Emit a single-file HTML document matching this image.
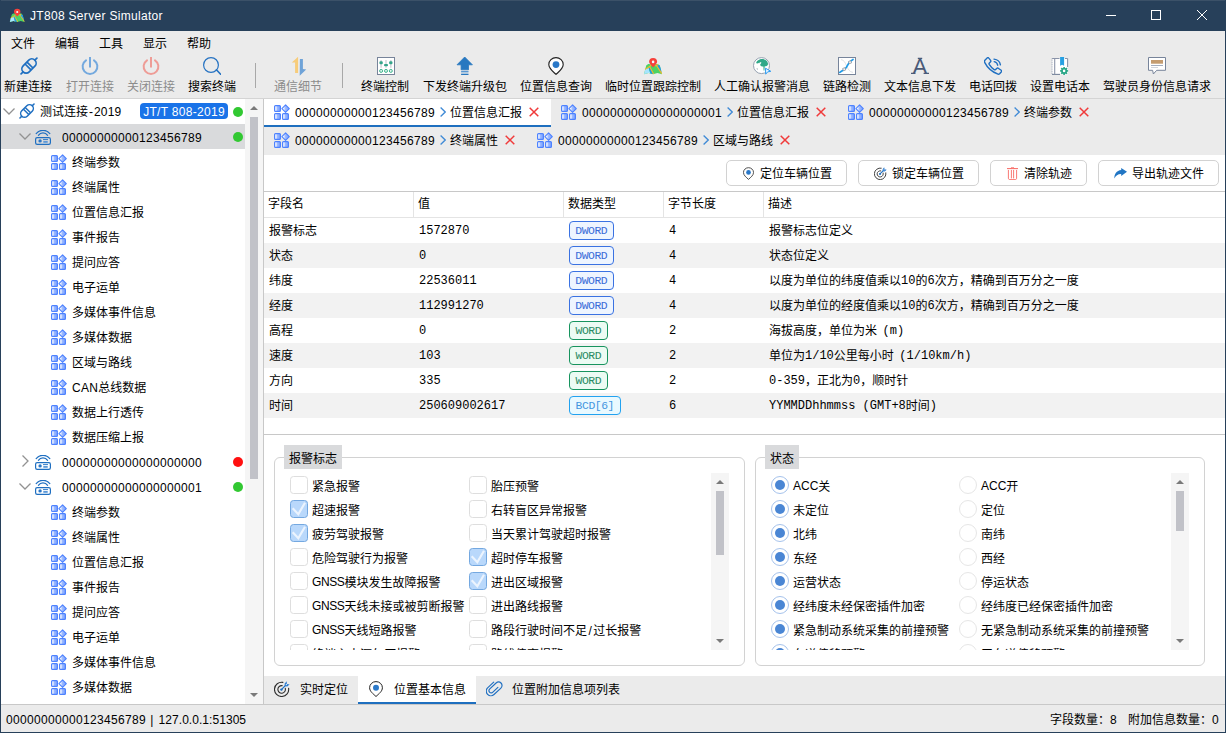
<!DOCTYPE html>
<html lang="zh-CN"><head><meta charset="utf-8"><title>JT808 Server Simulator</title>
<style>
*{box-sizing:border-box;margin:0;padding:0}
html,body{width:1226px;height:733px;overflow:hidden}
body{position:relative;background:#ebebeb;font-family:"Liberation Sans","Noto Sans CJK SC",sans-serif;font-size:12px;color:#000;line-height:16px}
.abs{position:absolute}
.t{position:absolute;white-space:nowrap;line-height:16px;height:16px}
.d{letter-spacing:.33px}
#title{left:0;top:0;width:1226px;height:31px;background:#27405a}
#frameL{left:0;top:0;width:1px;height:733px;background:#27405a}
#frameR{left:1225px;top:0;width:1px;height:733px;background:#27405a}
#frameB{left:0;top:732px;width:1226px;height:1px;background:#27405a}
.tb{position:absolute;top:53px;height:44px;text-align:center}
.tb .lbl{position:absolute;left:0;right:0;top:25px;height:16px;line-height:16px;white-space:nowrap;text-align:center}
.tb svg{position:absolute;top:4px}
.dis{color:#8c8c8c}
.sep{position:absolute;top:63px;width:1px;height:25px;background:#a8a8a8}
#tree{left:1px;top:99px;width:244px;height:606px;background:#fff;overflow:hidden}
.tr{position:absolute;left:0;width:244px;height:25px}
.tr .t{top:6px}
.tr svg{position:absolute}
.dot{position:absolute;width:10px;height:10px;border-radius:50%;left:232px;top:8px}
.g{background:#32c832}.r{background:#ff1010}
.sb{position:absolute;background:#f5f5f5}
.thumb{position:absolute;background:#c1c2c8}
.arr{position:absolute;width:0;height:0;border-left:4px solid transparent;border-right:4px solid transparent}
.up{border-bottom:4px solid #7a7a7a}.dn{border-top:4px solid #7a7a7a}
.tab{position:absolute;height:28px}
.tab svg{position:absolute;top:5px}
.tab .t{top:6px}
.btn{position:absolute;top:160px;height:26px;border:1px solid #d2d2d2;border-radius:5px;background:#fff}
.btn .t{top:5px}
.btn svg{position:absolute}
.hl{position:absolute;height:1px;background:#c8c8c8}
.vl{position:absolute;width:1px;background:#c8c8c8}
.row{position:absolute;left:264px;width:961px;height:25px}
.row .t{top:5px}
.m{font-family:"Liberation Mono","Noto Sans CJK SC",monospace}
.cj{position:relative;top:1px}
.gn{letter-spacing:-.4px;position:relative;top:-1px}
.la{position:relative;top:-1px}
.ns{display:inline-block;width:5.5px}
.bd{position:absolute;left:305px;top:3px;height:19px;border:1px solid;border-radius:4px;font-family:"Liberation Mono","Noto Sans CJK SC",monospace;font-size:11.4px;letter-spacing:-.45px;text-indent:-.45px;line-height:18.5px;text-align:center;overflow:hidden}
.dw{border-color:#3a72e2;background:#eef5ff;color:#3a6cd8;width:45px}
.wd{border-color:#17945e;background:#ecfbf3;color:#2a8a62;width:39px}
.bc{border-color:#22a2f0;background:#e9f9ff;color:#4496e0;width:52px}
.grp{position:absolute;top:457px;height:209px;border:1px solid #d2d2d2;border-radius:6px}
.gl{position:absolute;top:445px;height:24px;background:#d9dadc;line-height:20px;padding:4px 5px 0;white-space:nowrap}
.clip{position:absolute;top:473px;height:177px;overflow:hidden}
.cb{position:absolute;width:18px;height:18px;border:1px solid #dedede;border-radius:3.5px;background:#fff}
.cb.on{background:#b9d8fb;border-color:#74a8e0}
.cb.on svg{position:absolute;left:0;top:0}
.rb{position:absolute;width:18px;height:18px;border:1px solid #e6e6e6;border-radius:50%;background:#fff}
.rb.on{border-color:#a6c3ec}
.rb.on i{position:absolute;left:3px;top:3px;width:10px;height:10px;border-radius:50%;background:#4a86d4}
.btab{position:absolute;top:676px;height:28px}
.btab svg{position:absolute}
.btab .t{top:6px}
</style></head>
<body>

<svg width="0" height="0" style="position:absolute">
<defs>
<linearGradient id="gg" x1="0" x2="1" y1="0" y2="0"><stop offset="0" stop-color="#ffffff"/><stop offset=".22" stop-color="#f4f7ff"/><stop offset=".5" stop-color="#9ab8ff"/><stop offset="1" stop-color="#7aa2ff"/></linearGradient>
<symbol id="grid" viewBox="0 0 16 16">
<rect x=".6" y="1.6" width="5.8" height="5.8" rx=".9" fill="url(#gg)" stroke="#4d82ff" stroke-width="1.2"/>
<rect x=".6" y="9.6" width="5.8" height="5.8" rx=".9" fill="url(#gg)" stroke="#4d82ff" stroke-width="1.2"/>
<rect x="8.6" y="9.6" width="5.8" height="5.8" rx=".9" fill="url(#gg)" stroke="#4d82ff" stroke-width="1.2"/>
<path d="M11.6 .9 L15.3 4.6 L11.6 8.3 L7.9 4.6 Z" fill="url(#gg)" stroke="#4d82ff" stroke-width="1.1" stroke-linejoin="round"/>
</symbol>
<symbol id="plug" viewBox="0 0 18 18">
<g fill="none" stroke="#1f6fc1" stroke-width="1.7" stroke-linecap="round" transform="rotate(-45 9 9)">
<path d="M-2.2 9 H.4"/><path d="M17.6 9 H20.2"/>
<rect x=".7" y="4.7" width="16.6" height="8.6" rx="4.3"/>
<path d="M7.6 4.8 V13.2" stroke-linecap="butt"/><path d="M10.4 4.8 V13.2" stroke-linecap="butt"/>
</g></symbol>
<symbol id="power" viewBox="0 0 18 18">
<g fill="none" stroke="currentColor" stroke-width="2">
<path d="M9 0 V10.5"/><path d="M5 3.3 A7.38 7.38 0 1 0 13 3.3" stroke-linecap="round"/></g></symbol>
<symbol id="search" viewBox="0 0 18 18">
<g fill="none" stroke="#2572c2" stroke-linecap="round"><circle cx="8" cy="8" r="7.4" stroke-width="1.2"/><path d="M13.4 12.8 L17.6 17.2" stroke-width="1.6"/></g></symbol>
<symbol id="updn" viewBox="0 0 18 20">
<path d="M8.1 .8 L1.8 6.5 H5.1 V16.9 H8.1 Z" fill="#f7cc7a"/>
<path d="M9.9 3.1 H12.9 V13 L16.2 13.4 L9.7 19.7 Z" fill="#6fa3d8"/>
</symbol>
<symbol id="ctrl" viewBox="0 0 18 18">
<rect x=".5" y=".5" width="17" height="17" fill="#fff" stroke="#77849a" stroke-width="1"/>
<g stroke="#d6d9de" stroke-width="1.6"><path d="M4.1 3.1 V10.8"/><path d="M9 3.1 V10.8"/><path d="M13.8 3.1 V10.8"/></g>
<g fill="#35a58a"><rect x="2.4" y="4.2" width="3.4" height="3" rx="1.2"/><rect x="7" y="7" width="4" height="2.2" rx="1"/><rect x="12.1" y="4.2" width="3.4" height="3" rx="1.2"/></g>
<g fill="#e4f6ef" stroke="#3fb58f" stroke-width="1"><circle cx="4.1" cy="13.9" r="1.5"/><circle cx="9" cy="13.9" r="1.5"/><circle cx="13.8" cy="13.9" r="1.5"/></g>
</symbol>
<symbol id="upl" viewBox="0 0 18 18">
<path d="M8.7 0 L16.4 7.8 H12.5 V12.8 H5.1 V7.8 H1 Z" fill="#2878c0" stroke="#2878c0" stroke-width=".8" stroke-linejoin="round"/>
<rect x="5.1" y="14" width="7.4" height="1.4" fill="#5a98d2"/><rect x="5.1" y="16.7" width="7.4" height="1.3" fill="#2878c0"/>
</symbol>
<symbol id="pin" viewBox="0 0 14 16">
<path d="M7 15.5 C4 12.7 .6 10.3 .6 6.7 A6.4 6.1 0 0 1 13.4 6.7 C13.4 10.3 10 12.7 7 15.5 Z" fill="#fff" stroke="#222" stroke-width="1"/>
<circle cx="7" cy="6.7" r="3" fill="#2a78c8"/>
</symbol>
<symbol id="map" viewBox="0 0 18 18">
<path d="M0 17.2 L2.2 8.6 C3.5 6.6 5.5 6.6 7 7.4 L9 9 L11 7.4 C12.5 6.6 14.5 6.6 15.8 8.6 L18 17.2 L13.5 16 L9 17.2 L4.5 16 Z" fill="#4cd264"/>
<path d="M0 17.2 L1.2 12.4 L4.6 10.8 L6.4 16.5 L4.5 16 Z" fill="#a6e4fd"/>
<path d="M4.6 10.8 L6 10 L9 17 L6.4 16.5 Z" fill="#1e9be8"/>
<path d="M13 8 L15.8 8.6 L17.6 15 L13 10 Z" fill="#1e9be8"/>
<path d="M1 12.4 L5.6 9.6 L9.6 17 M5.6 9.6 L7.5 8 M11 9 L14 7.4 M12.4 8.4 L17.8 16.6" stroke="#f8b62a" stroke-width="1.1" fill="none"/>
<path d="M9.1 10.4 C7 7.8 5.1 6.8 5.1 4.8 A4 3.8 0 0 1 13.1 4.8 C13.1 6.8 11.2 7.8 9.1 10.4 Z" fill="#f7403a"/>
<circle cx="9.1" cy="4.9" r="1.3" fill="#e8fbff"/>
</symbol>
<symbol id="globe" viewBox="0 0 18 18">
<circle cx="8.5" cy="8.6" r="8" fill="#fff" stroke="#8b97a8" stroke-width=".9"/>
<path d="M3 6.5 C3.5 3.5 6.5 2 9 2 C12.5 2 15 4.5 15 7 C15 8.5 13.5 9.3 12 9.3 L11.7 9.3 L11.4 13.6 L10.6 13.6 L10.4 9.5 C9 9.5 7.5 9 7.2 8 C7 7 8.6 6.5 8.3 5.6 C7.5 4.9 6.6 5.6 6 6.6 L5.3 5.8 L4.6 6.8 L4 6 Z" fill="#2fa888"/>
<path d="M3.4 11.2 L5 11.4 L4.4 13.2 Z" fill="#aab2be"/>
<path d="M12.5 11.2 L17.8 14.3 L14.6 14.9 L12.7 17.2 Z" fill="#e8f5ff" stroke="#2e9bf0" stroke-width="1" stroke-linejoin="round"/>
</symbol>
<symbol id="chart" viewBox="0 0 18 18">
<rect x=".5" y=".5" width="17" height="17" fill="#fff" stroke="#77849a" stroke-width="1"/>
<path d="M3 2.6 C9 3 8 14.8 15 15.4" fill="none" stroke="#dfe2e6" stroke-width="1"/>
<path d="M1.8 15.4 C4 13.6 5.6 13.4 7 12 C9.6 9.6 9.8 7 11.6 5.2 C13 3.8 14 3 15 2.4" fill="none" stroke="#1e9be8" stroke-width="1.7" stroke-linecap="round"/>
<rect x="5" y="11" width="2.4" height="2.4" fill="#fff" stroke="#8a8f98" stroke-width=".7" transform="rotate(-20 6.2 12.2)"/>
<rect x="10.8" y="4" width="2.4" height="2.4" fill="#fff" stroke="#8a8f98" stroke-width=".7" transform="rotate(-20 12 5.2)"/>
</symbol>
<symbol id="phone" viewBox="0 0 18 18">
<g fill="none" stroke="#1f6fc1" stroke-width="1.4" stroke-linecap="round" stroke-linejoin="round">
<path d="M3.4 .8 L.9 3.2 C.4 3.8 .4 4.8 .8 5.6 C3.5 11 8.5 15 14 17.2 C14.6 17.4 15.2 17.2 15.6 16.8 L17.4 14.8 C17.8 14.3 17.7 13.7 17.2 13.3 L14.2 11.2 C13.7 10.9 13.1 11 12.7 11.4 L11.6 12.5 C11.2 12.9 10.6 12.9 10.1 12.6 C8.2 11.2 6.4 9.3 5.2 7.4 C4.9 6.9 5 6.4 5.4 6 L6.6 4.8 C7 4.4 7 3.8 6.6 3.4 L4.6 .9 C4.3 .5 3.8 .5 3.4 .8 Z"/>
<path d="M10.2 4.6 C12 5 13.4 6.4 13.7 8.2"/><path d="M10 2.1 C13.4 2.5 15.9 4.8 16.4 7.8"/>
</g></symbol>
<symbol id="book" viewBox="0 0 18 18">
<path d="M1 1.4 H16.6 V17.4 H1 Z" fill="#fff"/>
<path d="M1 17.4 H9" stroke="#77849a" stroke-width="1.1"/>
<path d="M16.6 1.6 V10" stroke="#8a93a8" stroke-width="1.1"/>
<path d="M1 1.5 H8.5 M14 1.5 H16.6" stroke="#8a93a8" stroke-width="1"/>
<path d="M1 1.4 V17.4" stroke="#aab2c0" stroke-width="1" stroke-dasharray="1.2 .6"/>
<path d="M3.7 1.4 V17.4" stroke="#8a93a8" stroke-width="1.1"/>
<path d="M9.1 0 H13.1 V8.8 L11.1 7.7 L9.1 8.8 Z" fill="#27a0e2"/>
<circle cx="13.1" cy="13.9" r="2.9" fill="#26a585"/>
<g stroke="#26a585" stroke-width="1.6"><path d="M13.1 9.9 V17.9"/><path d="M9.1 13.9 H17.1"/><path d="M10.27 11.07 L15.93 16.73"/><path d="M15.93 11.07 L10.27 16.73"/></g>
<circle cx="13.1" cy="13.9" r="1.3" fill="#fff"/>
</symbol>
<symbol id="chat" viewBox="0 0 18 18">
<path d="M.5 .5 H17.5 V13.3 H8.7 L5.4 17 L4.6 13.3 H.5 Z" fill="#fff" stroke="#77849a" stroke-width="1"/>
<rect x="3" y="3" width="12" height="3.7" fill="#c49c70"/>
<path d="M3 8.5 H15" stroke="#9aa5b8" stroke-width=".9"/><path d="M3 10.5 H10" stroke="#c5ccd6" stroke-width=".8"/>
</symbol>
<symbol id="term" viewBox="0 0 16 16">
<g fill="none" stroke="#1f6fc1" stroke-width="1.2" stroke-linecap="round">
<rect x=".6" y="7.6" width="14.8" height="6.8" rx="1.6"/>
<path d="M1.2 3.6 C4.6 -.8 11.4 -.8 14.8 3.6"/><path d="M3.4 5.3 C5.6 2 10.4 2 12.6 5.3"/>
<path d="M8.4 9.6 H12.6" stroke-width=".9"/>
</g><circle cx="5.1" cy="10.9" r="1.7" fill="#2b78c8"/><rect x="8.3" y="11" width="4.4" height="1.8" fill="#5b98d8"/>
</symbol>
<symbol id="target" viewBox="0 0 16 16">
<g fill="none" stroke="#2c2c2c" stroke-width="1.1" stroke-linecap="round">
<path d="M8.9 1.4 A7.1 7.1 0 1 0 14.6 7.2"/><path d="M8.3 4.7 A3.8 3.8 0 1 0 11.3 7.4"/>
</g>
<circle cx="7.4" cy="8.6" r="1.2" fill="#1f6fc1"/>
<path d="M7.4 8.6 L12 3.9" stroke="#1f6fc1" stroke-width="1.3" stroke-linecap="round"/>
<path d="M10.8 5.2 L10.6 2.8 L12.6 .3 L13 2.9 L15.6 3.4 L13.2 5.4 Z" fill="#2b7bd0"/>
<circle cx="12.4" cy="3.5" r=".7" fill="#cfe4f8"/>
</symbol>
<symbol id="trash" viewBox="0 0 11 13">
<g fill="none" stroke="#f86a64" stroke-width=".9" stroke-linecap="round">
<path d="M0 1.6 H11" stroke-width="1"/><path d="M3.7 1.5 C4.2 .4 4.6 .4 5.5 .4 C6.4 .4 6.8 .4 7.3 1.5"/>
<path d="M1.4 3.3 V11 C1.4 12.2 2 12.6 3 12.6 H8 C9 12.6 9.6 12.2 9.6 11 V3.3"/>
<path d="M4.4 3.3 V11 M6.6 3.3 V11"/>
</g></symbol>
<symbol id="share" viewBox="0 0 13 11">
<path d="M7.2 0 L13 3.8 L7.2 8 V6.1 C4 6 1.8 7.6 .4 10.6 C.2 6 2.6 2.6 7.2 2.1 Z" fill="#2176c4"/>
</symbol>
<symbol id="clip" viewBox="0 0 17 16">
<path d="M7.7 1.2 L1.6 6.8 C-.2 8.6 -.2 11.6 1.6 13.4 C3.4 15.2 6.2 15.2 8 13.5 L14.9 7.1 C16.4 5.7 16.4 3.4 15 2 C13.6 .6 11.5 .7 10.1 2 L3.8 7.9 C2.8 8.9 2.8 10.4 3.7 11.3 C4.6 12.2 6 12.1 6.9 11.2 L11.9 6.3" fill="none" stroke="#1f6fc1" stroke-width="1.15" stroke-linecap="round"/>
</symbol>
<symbol id="appicon" viewBox="0 0 18 18">
<path d="M0 17.2 L2.2 8.6 C3.5 6.6 5.5 6.6 7 7.4 L9 9 L11 7.4 C12.5 6.6 14.5 6.6 15.8 8.6 L18 17.2 L13.5 16 L9 17.2 L4.5 16 Z" fill="#4cd264"/>
<path d="M0 17.2 L1.2 12.4 L4.6 10.8 L6.4 16.5 L4.5 16 Z" fill="#a6e4fd"/>
<path d="M4.6 10.8 L6 10 L9 17 L6.4 16.5 Z" fill="#1e9be8"/>
<path d="M13 8 L15.8 8.6 L17.6 15 L13 10 Z" fill="#1e9be8"/>
<path d="M1 12.4 L5.6 9.6 L9.6 17 M5.6 9.6 L7.5 8 M11 9 L14 7.4 M12.4 8.4 L17.8 16.6" stroke="#f8b62a" stroke-width="1.1" fill="none"/>
<path d="M9.1 10.4 C7 7.8 5.1 6.8 5.1 4.8 A4 3.8 0 0 1 13.1 4.8 C13.1 6.8 11.2 7.8 9.1 10.4 Z" fill="#f7403a"/>
<circle cx="9.1" cy="4.9" r="1.3" fill="#e8fbff"/>
</symbol>
</defs></svg>

<div id="title" class="abs"></div>
<svg class="abs" style="left:9px;top:7.6px" width="16.3" height="14.6" preserveAspectRatio="none"><use href="#appicon"/></svg>
<div class="abs" style="left:0;top:0;width:1226px;height:1px;background:#3b5168"></div>
<div class="t" style="left:30px;top:8px;color:#fff;font-size:12px;letter-spacing:.31px">JT808 Server Simulator</div>
<svg class="abs" style="left:1100px;top:0" width="120" height="31"><g stroke="#fff" stroke-width="1" fill="none"><path d="M6 15.5 H16"/><rect x="51.5" y="10.5" width="9" height="9"/><path d="M97 10 L107 20 M107 10 L97 20"/></g></svg>
<div class="t" style="left:11px;top:36px">文件</div>
<div class="t" style="left:55px;top:36px">编辑</div>
<div class="t" style="left:99px;top:36px">工具</div>
<div class="t" style="left:143px;top:36px">显示</div>
<div class="t" style="left:187px;top:36px">帮助</div>
<div class="t " style="left:4px;top:79px">新建连接</div>
<svg class="abs" style="left:20px;top:57px" width="18" height="18" ><use href="#plug"/></svg>
<div class="t dis" style="left:66px;top:79px">打开连接</div>
<svg class="abs" style="left:81px;top:57px" width="18" height="18"  color="#74a9de"><use href="#power"/></svg>
<div class="t dis" style="left:127px;top:79px">关闭连接</div>
<svg class="abs" style="left:142px;top:57px" width="18" height="18"  color="#ee9c96"><use href="#power"/></svg>
<div class="t " style="left:188px;top:79px">搜索终端</div>
<svg class="abs" style="left:203px;top:57px" width="18" height="18" ><use href="#search"/></svg>
<div class="t dis" style="left:274px;top:79px">通信细节</div>
<svg class="abs" style="left:290px;top:56px" width="18" height="20" ><use href="#updn"/></svg>
<div class="t " style="left:361px;top:79px">终端控制</div>
<svg class="abs" style="left:377px;top:57px" width="18" height="18" ><use href="#ctrl"/></svg>
<div class="t " style="left:423px;top:79px">下发终端升级包</div>
<svg class="abs" style="left:456px;top:57px" width="18" height="18" ><use href="#upl"/></svg>
<div class="t " style="left:520px;top:79px">位置信息查询</div>
<svg class="abs" style="left:548px;top:57px" width="16" height="18" ><use href="#pin"/></svg>
<div class="t " style="left:605px;top:79px">临时位置跟踪控制</div>
<svg class="abs" style="left:644px;top:57px" width="18" height="18" ><use href="#map"/></svg>
<div class="t " style="left:714px;top:79px">人工确认报警消息</div>
<svg class="abs" style="left:753px;top:57px" width="18" height="18" ><use href="#globe"/></svg>
<div class="t " style="left:823px;top:79px">链路检测</div>
<svg class="abs" style="left:838px;top:57px" width="18" height="18" ><use href="#chart"/></svg>
<div class="t " style="left:884px;top:79px">文本信息下发</div>
<svg class="abs" style="left:911px;top:57px" width="18" height="18"><text x="1.6" y="16.9" textLength="14.8" lengthAdjust="spacingAndGlyphs" font-family="Liberation Sans,sans-serif" font-size="22.4" fill="#4a5a78">A</text><path d="M0 16.3 H4.4 M12.6 16.3 H18 M6.8 1.3 H11.2" stroke="#4a5a78" stroke-width="1.3" fill="none"/></svg>
<div class="t " style="left:969px;top:79px">电话回拨</div>
<svg class="abs" style="left:984px;top:57px" width="18" height="18" ><use href="#phone"/></svg>
<div class="t " style="left:1030px;top:79px">设置电话本</div>
<svg class="abs" style="left:1051px;top:57px" width="18" height="18" ><use href="#book"/></svg>
<div class="t " style="left:1103px;top:79px">驾驶员身份信息请求</div>
<svg class="abs" style="left:1148px;top:57px" width="18" height="18" ><use href="#chat"/></svg>
<div class="sep" style="left:255px"></div><div class="sep" style="left:342px"></div>
<div class="hl" style="left:1px;top:98px;width:1224px;background:#d4d4d4"></div>
<div id="tree" class="abs">
<div class="tr" style="top:0px">
<svg style="left:2px;top:9px" width="12" height="7"><path d="M.5 .5 L6 6 L11.5 .5" fill="none" stroke="#929292" stroke-width="1.3"/></svg>
<svg style="left:18px;top:4px" width="16" height="16"><use href="#plug"/></svg>
<div class="t" style="left:39px;top:5px">测试连接<span style="padding:0 1px">-</span><span style="letter-spacing:.15px">2019</span></div>
<div class="t" style="left:139px;top:4px;width:88px;height:16px;background:#1a73e8;border-radius:4px;color:#fff;text-align:center;letter-spacing:.3px;line-height:18px;overflow:hidden">JT/T 808-2019</div>
<div class="dot g"></div>
</div>
<div class="tr" style="top:25px;background:#d9dadc">
<svg style="left:18px;top:9px" width="12" height="7"><path d="M.5 .5 L6 6 L11.5 .5" fill="none" stroke="#929292" stroke-width="1.3"/></svg>
<svg style="left:34px;top:6px" width="16" height="16"><use href="#term"/></svg>
<div class="t d" style="left:61px">00000000000123456789</div>
<div class="dot g"></div>
</div>
<div class="tr" style="top:50px">
<svg style="left:50px;top:5px" width="16" height="16"><use href="#grid"/></svg>
<div class="t" style="left:71px">终端参数</div>
</div>
<div class="tr" style="top:75px">
<svg style="left:50px;top:5px" width="16" height="16"><use href="#grid"/></svg>
<div class="t" style="left:71px">终端属性</div>
</div>
<div class="tr" style="top:100px">
<svg style="left:50px;top:5px" width="16" height="16"><use href="#grid"/></svg>
<div class="t" style="left:71px">位置信息汇报</div>
</div>
<div class="tr" style="top:125px">
<svg style="left:50px;top:5px" width="16" height="16"><use href="#grid"/></svg>
<div class="t" style="left:71px">事件报告</div>
</div>
<div class="tr" style="top:150px">
<svg style="left:50px;top:5px" width="16" height="16"><use href="#grid"/></svg>
<div class="t" style="left:71px">提问应答</div>
</div>
<div class="tr" style="top:175px">
<svg style="left:50px;top:5px" width="16" height="16"><use href="#grid"/></svg>
<div class="t" style="left:71px">电子运单</div>
</div>
<div class="tr" style="top:200px">
<svg style="left:50px;top:5px" width="16" height="16"><use href="#grid"/></svg>
<div class="t" style="left:71px">多媒体事件信息</div>
</div>
<div class="tr" style="top:225px">
<svg style="left:50px;top:5px" width="16" height="16"><use href="#grid"/></svg>
<div class="t" style="left:71px">多媒体数据</div>
</div>
<div class="tr" style="top:250px">
<svg style="left:50px;top:5px" width="16" height="16"><use href="#grid"/></svg>
<div class="t" style="left:71px">区域与路线</div>
</div>
<div class="tr" style="top:275px">
<svg style="left:50px;top:5px" width="16" height="16"><use href="#grid"/></svg>
<div class="t" style="left:71px"><span style="letter-spacing:.3px">CAN</span>总线数据</div>
</div>
<div class="tr" style="top:300px">
<svg style="left:50px;top:5px" width="16" height="16"><use href="#grid"/></svg>
<div class="t" style="left:71px">数据上行透传</div>
</div>
<div class="tr" style="top:325px">
<svg style="left:50px;top:5px" width="16" height="16"><use href="#grid"/></svg>
<div class="t" style="left:71px">数据压缩上报</div>
</div>
<div class="tr" style="top:350px">
<svg style="left:21px;top:6px" width="7" height="12"><path d="M.5 .5 L6 6 L.5 11.5" fill="none" stroke="#929292" stroke-width="1.3"/></svg>
<svg style="left:34px;top:6px" width="16" height="16"><use href="#term"/></svg>
<div class="t d" style="left:61px">00000000000000000000</div>
<div class="dot r"></div>
</div>
<div class="tr" style="top:375px">
<svg style="left:18px;top:9px" width="12" height="7"><path d="M.5 .5 L6 6 L11.5 .5" fill="none" stroke="#929292" stroke-width="1.3"/></svg>
<svg style="left:34px;top:6px" width="16" height="16"><use href="#term"/></svg>
<div class="t d" style="left:61px">00000000000000000001</div>
<div class="dot g"></div>
</div>
<div class="tr" style="top:400px">
<svg style="left:50px;top:5px" width="16" height="16"><use href="#grid"/></svg>
<div class="t" style="left:71px">终端参数</div>
</div>
<div class="tr" style="top:425px">
<svg style="left:50px;top:5px" width="16" height="16"><use href="#grid"/></svg>
<div class="t" style="left:71px">终端属性</div>
</div>
<div class="tr" style="top:450px">
<svg style="left:50px;top:5px" width="16" height="16"><use href="#grid"/></svg>
<div class="t" style="left:71px">位置信息汇报</div>
</div>
<div class="tr" style="top:475px">
<svg style="left:50px;top:5px" width="16" height="16"><use href="#grid"/></svg>
<div class="t" style="left:71px">事件报告</div>
</div>
<div class="tr" style="top:500px">
<svg style="left:50px;top:5px" width="16" height="16"><use href="#grid"/></svg>
<div class="t" style="left:71px">提问应答</div>
</div>
<div class="tr" style="top:525px">
<svg style="left:50px;top:5px" width="16" height="16"><use href="#grid"/></svg>
<div class="t" style="left:71px">电子运单</div>
</div>
<div class="tr" style="top:550px">
<svg style="left:50px;top:5px" width="16" height="16"><use href="#grid"/></svg>
<div class="t" style="left:71px">多媒体事件信息</div>
</div>
<div class="tr" style="top:575px">
<svg style="left:50px;top:5px" width="16" height="16"><use href="#grid"/></svg>
<div class="t" style="left:71px">多媒体数据</div>
</div>
</div>
<div class="sb" style="left:245px;top:99px;width:18px;height:606px"></div>
<div class="arr up" style="left:250px;top:106px"></div>
<div class="thumb" style="left:250px;top:117px;width:8px;height:362px"></div>
<div class="arr dn" style="left:250px;top:693px"></div>
<div class="vl" style="left:263px;top:99px;height:606px"></div>
<div class="abs" style="left:264px;top:155px;width:961px;height:521px;background:#fff"></div>
<div class="tab" style="left:264px;top:99px;width:287px;background:#fff;border-bottom:2px solid #1e6fbf;"><svg style="left:10px" width="16" height="16"><use href="#grid"/></svg><div class="t" style="left:31px"><span class="d">00000000000123456789</span></div><svg style="left:176px;top:8px" width="6" height="10"><path d="M.6 .5 L5.2 5 L.6 9.5" fill="none" stroke="#3f8ad6" stroke-width="1.3"/></svg><div class="t" style="left:186px">位置信息汇报</div><svg style="left:265px;top:8px" width="10" height="10"><path d="M.7 .7 L9.3 9.3 M9.3 .7 L.7 9.3" stroke="#f03a3a" stroke-width="1.5"/></svg></div>
<div class="tab" style="left:551px;top:99px;width:287px;"><svg style="left:10px" width="16" height="16"><use href="#grid"/></svg><div class="t" style="left:31px"><span class="d">00000000000000000001</span></div><svg style="left:176px;top:8px" width="6" height="10"><path d="M.6 .5 L5.2 5 L.6 9.5" fill="none" stroke="#3f8ad6" stroke-width="1.3"/></svg><div class="t" style="left:186px">位置信息汇报</div><svg style="left:265px;top:8px" width="10" height="10"><path d="M.7 .7 L9.3 9.3 M9.3 .7 L.7 9.3" stroke="#f03a3a" stroke-width="1.5"/></svg></div>
<div class="tab" style="left:838px;top:99px;width:263px;"><svg style="left:10px" width="16" height="16"><use href="#grid"/></svg><div class="t" style="left:31px"><span class="d">00000000000123456789</span></div><svg style="left:176px;top:8px" width="6" height="10"><path d="M.6 .5 L5.2 5 L.6 9.5" fill="none" stroke="#3f8ad6" stroke-width="1.3"/></svg><div class="t" style="left:186px">终端参数</div><svg style="left:241px;top:8px" width="10" height="10"><path d="M.7 .7 L9.3 9.3 M9.3 .7 L.7 9.3" stroke="#f03a3a" stroke-width="1.5"/></svg></div>
<div class="tab" style="left:264px;top:127px;width:263px;"><svg style="left:10px" width="16" height="16"><use href="#grid"/></svg><div class="t" style="left:31px"><span class="d">00000000000123456789</span></div><svg style="left:176px;top:8px" width="6" height="10"><path d="M.6 .5 L5.2 5 L.6 9.5" fill="none" stroke="#3f8ad6" stroke-width="1.3"/></svg><div class="t" style="left:186px">终端属性</div><svg style="left:241px;top:8px" width="10" height="10"><path d="M.7 .7 L9.3 9.3 M9.3 .7 L.7 9.3" stroke="#f03a3a" stroke-width="1.5"/></svg></div>
<div class="tab" style="left:527px;top:127px;width:275px;"><svg style="left:10px" width="16" height="16"><use href="#grid"/></svg><div class="t" style="left:31px"><span class="d">00000000000123456789</span></div><svg style="left:176px;top:8px" width="6" height="10"><path d="M.6 .5 L5.2 5 L.6 9.5" fill="none" stroke="#3f8ad6" stroke-width="1.3"/></svg><div class="t" style="left:186px">区域与路线</div><svg style="left:253px;top:8px" width="10" height="10"><path d="M.7 .7 L9.3 9.3 M9.3 .7 L.7 9.3" stroke="#f03a3a" stroke-width="1.5"/></svg></div>
<div class="btn" style="left:726px;width:121px"><svg style="left:16px;top:6px" width="11" height="13"><use href="#pin"/></svg><div class="t" style="left:33px">定位车辆位置</div></div>
<div class="btn" style="left:858px;width:121px"><svg style="left:15px;top:6px" width="13" height="13"><use href="#target"/></svg><div class="t" style="left:33px">锁定车辆位置</div></div>
<div class="btn" style="left:990px;width:97px"><svg style="left:16px;top:6px" width="11" height="13"><use href="#trash"/></svg><div class="t" style="left:33px">清除轨迹</div></div>
<div class="btn" style="left:1098px;width:121px"><svg style="left:15px;top:6.5px" width="13" height="11"><use href="#share"/></svg><div class="t" style="left:33px">导出轨迹文件</div></div>
<div class="hl" style="left:264px;top:191px;width:961px"></div>
<div class="hl" style="left:264px;top:217px;width:961px;background:#e4e4e4"></div>
<div class="vl" style="left:413px;top:192px;height:25px;background:#e4e4e4"></div>
<div class="vl" style="left:563px;top:192px;height:25px;background:#e4e4e4"></div>
<div class="vl" style="left:663px;top:192px;height:25px;background:#e4e4e4"></div>
<div class="vl" style="left:763px;top:192px;height:25px;background:#e4e4e4"></div>
<div class="t" style="left:268px;top:196px">字段名</div>
<div class="t" style="left:418px;top:196px">值</div>
<div class="t" style="left:568px;top:196px">数据类型</div>
<div class="t" style="left:668px;top:196px">字节长度</div>
<div class="t" style="left:768px;top:196px">描述</div>
<div class="row" style="top:218px;">
<div class="t" style="left:5px">报警标志</div>
<div class="t m" style="left:155px">1572870</div>
<div class="bd dw">DWORD</div>
<div class="t m" style="left:405px">4</div>
<div class="t m" style="left:505px"><span class="cj">报警标志位定义</span></div>
</div>
<div class="row" style="top:243px;background:#f2f2f2;">
<div class="t" style="left:5px">状态</div>
<div class="t m" style="left:155px">0</div>
<div class="bd dw">DWORD</div>
<div class="t m" style="left:405px">4</div>
<div class="t m" style="left:505px"><span class="cj">状态位定义</span></div>
</div>
<div class="row" style="top:268px;">
<div class="t" style="left:5px">纬度</div>
<div class="t m" style="left:155px">22536011</div>
<div class="bd dw">DWORD</div>
<div class="t m" style="left:405px">4</div>
<div class="t m" style="left:505px"><span class="cj">以度为单位的纬度值乘以</span>10<span class="cj">的</span>6<span class="cj">次方，精确到百万分之一度</span></div>
</div>
<div class="row" style="top:293px;background:#f2f2f2;">
<div class="t" style="left:5px">经度</div>
<div class="t m" style="left:155px">112991270</div>
<div class="bd dw">DWORD</div>
<div class="t m" style="left:405px">4</div>
<div class="t m" style="left:505px"><span class="cj">以度为单位的经度值乘以</span>10<span class="cj">的</span>6<span class="cj">次方，精确到百万分之一度</span></div>
</div>
<div class="row" style="top:318px;">
<div class="t" style="left:5px">高程</div>
<div class="t m" style="left:155px">0</div>
<div class="bd wd">WORD</div>
<div class="t m" style="left:405px">2</div>
<div class="t m" style="left:505px"><span class="cj">海拔高度，单位为米</span><span class="ns"> </span>(m)</div>
</div>
<div class="row" style="top:343px;background:#f2f2f2;">
<div class="t" style="left:5px">速度</div>
<div class="t m" style="left:155px">103</div>
<div class="bd wd">WORD</div>
<div class="t m" style="left:405px">2</div>
<div class="t m" style="left:505px"><span class="cj">单位为</span>1/10<span class="cj">公里每小时</span><span class="ns"> </span>(1/10km/h)</div>
</div>
<div class="row" style="top:368px;">
<div class="t" style="left:5px">方向</div>
<div class="t m" style="left:155px">335</div>
<div class="bd wd">WORD</div>
<div class="t m" style="left:405px">2</div>
<div class="t m" style="left:505px">0-359<span class="cj">，正北为</span>0<span class="cj">，顺时针</span></div>
</div>
<div class="row" style="top:393px;background:#f2f2f2;">
<div class="t" style="left:5px">时间</div>
<div class="t m" style="left:155px">250609002617</div>
<div class="bd bc">BCD[6]</div>
<div class="t m" style="left:405px">6</div>
<div class="t m" style="left:505px">YYMMDDhhmmss (GMT+8<span class="cj">时间</span>)</div>
</div>
<div class="hl" style="left:264px;top:434px;width:961px"></div>
<div class="grp" style="left:274px;width:471px"></div>
<div class="grp" style="left:755px;width:450px"></div>
<div class="gl" style="left:284px">报警标志</div>
<div class="gl" style="left:765px">状态</div>
<div class="clip" style="left:284px;width:427px">
<div class="cb" style="left:6px;top:3px"></div><div class="t" style="left:28px;top:6px">紧急报警</div>
<div class="cb" style="left:185px;top:3px"></div><div class="t" style="left:207px;top:6px">胎压预警</div>
<div class="cb on" style="left:6px;top:27px"><svg width="16" height="16"><path d="M1.7 7.3 L7.3 13.2 L14 1.7" fill="none" stroke="#fff" stroke-opacity=".72" stroke-width="2.2"/></svg></div><div class="t" style="left:28px;top:30px">超速报警</div>
<div class="cb" style="left:185px;top:27px"></div><div class="t" style="left:207px;top:30px">右转盲区异常报警</div>
<div class="cb on" style="left:6px;top:51px"><svg width="16" height="16"><path d="M1.7 7.3 L7.3 13.2 L14 1.7" fill="none" stroke="#fff" stroke-opacity=".72" stroke-width="2.2"/></svg></div><div class="t" style="left:28px;top:54px">疲劳驾驶报警</div>
<div class="cb" style="left:185px;top:51px"></div><div class="t" style="left:207px;top:54px">当天累计驾驶超时报警</div>
<div class="cb" style="left:6px;top:75px"></div><div class="t" style="left:28px;top:78px">危险驾驶行为报警</div>
<div class="cb on" style="left:185px;top:75px"><svg width="16" height="16"><path d="M1.7 7.3 L7.3 13.2 L14 1.7" fill="none" stroke="#fff" stroke-opacity=".72" stroke-width="2.2"/></svg></div><div class="t" style="left:207px;top:78px">超时停车报警</div>
<div class="cb" style="left:6px;top:99px"></div><div class="t" style="left:28px;top:102px"><span class="gn">GNSS</span>模块发生故障报警</div>
<div class="cb on" style="left:185px;top:99px"><svg width="16" height="16"><path d="M1.7 7.3 L7.3 13.2 L14 1.7" fill="none" stroke="#fff" stroke-opacity=".72" stroke-width="2.2"/></svg></div><div class="t" style="left:207px;top:102px">进出区域报警</div>
<div class="cb" style="left:6px;top:123px"></div><div class="t" style="left:28px;top:126px"><span class="gn">GNSS</span>天线未接或被剪断报警</div>
<div class="cb" style="left:185px;top:123px"></div><div class="t" style="left:207px;top:126px">进出路线报警</div>
<div class="cb" style="left:6px;top:147px"></div><div class="t" style="left:28px;top:150px"><span class="gn">GNSS</span>天线短路报警</div>
<div class="cb" style="left:185px;top:147px"></div><div class="t" style="left:207px;top:150px">路段行驶时间不足<span style="padding:0 1.5px">/</span>过长报警</div>
<div class="cb" style="left:6px;top:171px"></div><div class="t" style="left:28px;top:174px">终端主电源欠压报警</div>
<div class="cb" style="left:185px;top:171px"></div><div class="t" style="left:207px;top:174px">路线偏离报警</div>
</div>
<div class="sb" style="left:711px;top:473px;width:18px;height:177px"></div>
<div class="arr up" style="left:716px;top:480px"></div>
<div class="thumb" style="left:716px;top:491px;width:8px;height:64px"></div>
<div class="arr dn" style="left:716px;top:639px"></div>
<div class="clip" style="left:765px;width:407px">
<div class="rb on" style="left:6px;top:3px"><i></i></div><div class="t" style="left:28px;top:6px"><span class="la">ACC</span>关</div>
<div class="rb" style="left:194px;top:3px"></div><div class="t" style="left:216px;top:6px"><span class="la">ACC</span>开</div>
<div class="rb on" style="left:6px;top:27px"><i></i></div><div class="t" style="left:28px;top:30px">未定位</div>
<div class="rb" style="left:194px;top:27px"></div><div class="t" style="left:216px;top:30px">定位</div>
<div class="rb on" style="left:6px;top:51px"><i></i></div><div class="t" style="left:28px;top:54px">北纬</div>
<div class="rb" style="left:194px;top:51px"></div><div class="t" style="left:216px;top:54px">南纬</div>
<div class="rb on" style="left:6px;top:75px"><i></i></div><div class="t" style="left:28px;top:78px">东经</div>
<div class="rb" style="left:194px;top:75px"></div><div class="t" style="left:216px;top:78px">西经</div>
<div class="rb on" style="left:6px;top:99px"><i></i></div><div class="t" style="left:28px;top:102px">运营状态</div>
<div class="rb" style="left:194px;top:99px"></div><div class="t" style="left:216px;top:102px">停运状态</div>
<div class="rb on" style="left:6px;top:123px"><i></i></div><div class="t" style="left:28px;top:126px">经纬度未经保密插件加密</div>
<div class="rb" style="left:194px;top:123px"></div><div class="t" style="left:216px;top:126px">经纬度已经保密插件加密</div>
<div class="rb on" style="left:6px;top:147px"><i></i></div><div class="t" style="left:28px;top:150px">紧急制动系统采集的前撞预警</div>
<div class="rb" style="left:194px;top:147px"></div><div class="t" style="left:216px;top:150px">无紧急制动系统采集的前撞预警</div>
<div class="rb on" style="left:6px;top:171px"><i></i></div><div class="t" style="left:28px;top:174px">车道偏移预警</div>
<div class="rb" style="left:194px;top:171px"></div><div class="t" style="left:216px;top:174px">无车道偏移预警</div>
</div>
<div class="sb" style="left:1171px;top:473px;width:18px;height:177px"></div>
<div class="arr up" style="left:1176px;top:480px"></div>
<div class="thumb" style="left:1176px;top:491px;width:8px;height:40px"></div>
<div class="arr dn" style="left:1176px;top:639px"></div>
<div class="abs" style="left:264px;top:676px;width:961px;height:28px;background:#ebebeb"></div>
<div class="btab" style="left:264px;width:94px"><svg style="left:10px;top:5px" width="16" height="16"><use href="#target"/></svg><div class="t" style="left:36px">实时定位</div></div>
<div class="btab" style="left:358px;width:118px;background:#fff;border-bottom:2px solid #1e6fbf"><svg style="left:11px;top:5px" width="14" height="16"><use href="#pin"/></svg><div class="t" style="left:36px">位置基本信息</div></div>
<div class="btab" style="left:476px;width:154px"><svg style="left:10px;top:5px" width="17" height="16"><use href="#clip"/></svg><div class="t" style="left:36px">位置附加信息项列表</div></div>
<div class="hl" style="left:1px;top:704px;width:1224px"></div>
<div class="t" style="left:6px;top:712px"><span class="d">00000000000123456789</span><span style="letter-spacing:.9px"> | </span><span style="letter-spacing:.05px">127.0.0.1:51305</span></div>
<div class="t" style="left:1050px;top:712px">字段数量：8</div>
<div class="t" style="left:1128px;top:712px">附加信息数量：0</div>
<div id="frameL" class="abs"></div><div id="frameR" class="abs"></div><div id="frameB" class="abs"></div>
</body></html>
